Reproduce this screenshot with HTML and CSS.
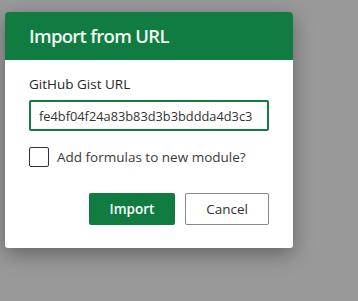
FILE: index.html
```html
<!DOCTYPE html>
<html>
<head>
<meta charset="utf-8">
<link rel="stylesheet" href="styles.css">
</head>
<body>
<div class="overlay">
  <div class="dialog">
    <div class="header">Import from URL</div>
    <div class="body">
      <div class="label">GitHub Gist URL</div>
      <div class="input"><span>fe4bf04f24a83b83d3b3bddda4d3c3</span></div>
      <label class="check">
        <span class="box"></span>
        <span class="check-text">Add formulas to new module?</span>
      </label>
      <div class="actions">
        <button class="btn primary">Import</button>
        <button class="btn secondary">Cancel</button>
      </div>
    </div>
  </div>
</div>
</body>
</html>
```
FILE: styles.css
```css
html, body {
  margin: 0;
  padding: 0;
}
body {
  width: 358px;
  height: 301px;
  overflow: hidden;
  background: #999999;
  font-family: "Open Sans", "Noto Sans", sans-serif;
}
.overlay {
  padding: 12px 0 0 5px;
}
.dialog {
  width: 288px;
  height: 236px;
  background: #ffffff;
  border-radius: 3px;
  box-shadow: 0 6px 20px rgba(0, 0, 0, 0.35);
  overflow: hidden;
  display: flex;
  flex-direction: column;
}
.header {
  height: 48px;
  background: #107c41;
  color: #eefbf1;
  font-size: 18.5px;
  font-weight: 600;
  line-height: 48px;
  padding-left: 24px;
  letter-spacing: -0.7px;
}
.body {
  padding: 14px 24px 0 24px;
  display: flex;
  flex-direction: column;
}
.label {
  font-size: 13.5px;
  color: #252525;
  line-height: 20px;
  height: 26px;
}
.input {
  box-sizing: border-box;
  height: 31px;
  width: 240px;
  border: 2px solid #107c41;
  border-radius: 2px;
  display: flex;
  justify-content: flex-start;
  align-items: center;
  overflow: hidden;
  white-space: nowrap;
  padding: 0 8px 0 8px;
  font-size: 12.8px;
  color: #333333;
}
.check {
  display: flex;
  align-items: center;
  margin-top: 16px;
  height: 20px;
}
.box {
  box-sizing: border-box;
  width: 20px;
  height: 20px;
  border: 1px solid #323130;
  border-radius: 2px;
  flex: none;
}
.check-text {
  margin-left: 8px;
  font-size: 13.5px;
  color: #3a3a3a;
}
.actions {
  display: flex;
  justify-content: flex-end;
  gap: 10px;
  margin-top: 26px;
}
.btn {
  box-sizing: border-box;
  height: 32px;
  font-family: inherit;
  font-size: 13.5px;
  border-radius: 2px;
  margin: 0;
}
.primary {
  width: 86px;
  background: #107c41;
  border: none;
  color: #ffffff;
  font-weight: 600;
}
.secondary {
  width: 84px;
  background: #ffffff;
  border: 1px solid #8a8886;
  color: #323130;
}
```
